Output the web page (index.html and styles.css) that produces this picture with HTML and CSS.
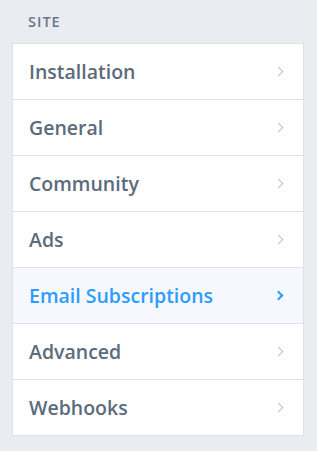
FILE: index.html
```html
<!DOCTYPE html>
<html lang="en">
<head>
  <meta charset="UTF-8" />
  <title>Settings</title>
  <link rel="stylesheet" href="styles.css">
</head>
<body>
  <div class="sidebar">
    <h4 class="section-title">Site</h4>
    <ul class="menu">
      <li><a href="#">Installation <span class="chev"></span></a></li>
      <li><a href="#">General <span class="chev"></span></a></li>
      <li><a href="#">Community <span class="chev"></span></a></li>
      <li><a href="#">Ads <span class="chev"></span></a></li>
      <li class="active"><a href="#">Email Subscriptions <span class="chev"></span></a></li>
      <li><a href="#">Advanced <span class="chev"></span></a></li>
      <li><a href="#">Webhooks <span class="chev"></span></a></li>
    </ul>
  </div>
</body>
</html>
```

FILE: styles.css
```css
* {
  box-sizing: border-box;
}

html, body {
  margin: 0;
  padding: 0;
  width: 100%;
  height: 100%;
  background: #e9ecf1;
  font-family: 'Open Sans', sans-serif;
}

.sidebar {
  padding: 13px 13px 0 12px;
}

.section-title {
  margin: 0 0 12px 16px;
  font-size: 14.5px;
  font-weight: 600;
  letter-spacing: 1px;
  text-transform: uppercase;
  color: #67788a;
  line-height: 18px;
}

.menu {
  list-style: none;
  margin: 0;
  padding: 0;
  background: #fff;
  border: 1px solid #dde1e8;
}

.menu li + li {
  border-top: 1px solid #dde1e8;
}

.menu a {
  display: flex;
  align-items: center;
  justify-content: space-between;
  height: 55px;
  padding: 0 21px 0 16px;
  font-size: 19.5px;
  font-weight: 600;
  color: #5b6b7c;
  text-decoration: none;
}

.menu .active a {
  background: #f6f8fd;
  color: #2d9cff;
}

.chev {
  width: 7px;
  height: 7px;
  border-right: 1.5px solid #b9c3ce;
  border-top: 1.5px solid #b9c3ce;
  transform: rotate(45deg);
}

.menu .active .chev {
  border-right-width: 2px;
  border-top-width: 2px;
  border-color: #2d9cff;
}
```
